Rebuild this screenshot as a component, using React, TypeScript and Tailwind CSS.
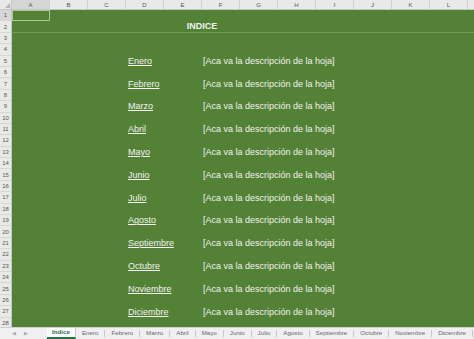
const columns = ["A", "B", "C", "D", "E", "F", "G", "H", "I", "J", "K", "L"]

const months = [
  "Enero",
  "Febrero",
  "Marzo",
  "Abril",
  "Mayo",
  "Junio",
  "Julio",
  "Agosto",
  "Septiembre",
  "Octubre",
  "Noviembre",
  "Diciembre",
]

const rowNumbers = Array.from({ length: 28 }, (_, i) => i + 1)

function ColumnHeader() {
  return (
    <div className="flex h-[10px] shrink-0 bg-[#e9e9e9] border-b border-[#c6c6c6]">
      <div className="relative w-[12px] shrink-0 border-r border-[#c6c6c6]">
        <div className="absolute right-[1px] bottom-[1px] w-0 h-0 border-l-[5px] border-l-transparent border-b-[5px] border-b-[#b4b4b4]" />
      </div>
      {columns.map((col) => (
        <div
          key={col}
          className={
            "w-[38px] shrink-0 flex items-center justify-center text-[6px] leading-none text-[#555] border-r border-[#d0d0d0] " +
            (col === "A" ? "bg-[#d6d6d6]" : "")
          }
        >
          {col}
        </div>
      ))}
      <div className="flex-1" />
    </div>
  )
}

function RowHeader() {
  return (
    <div className="w-[12px] shrink-0 bg-[#e9e9e9] border-r border-[#c6c6c6] flex flex-col">
      {rowNumbers.map((n) => (
        <div
          key={n}
          className={
            "h-[11.4px] shrink-0 flex items-center justify-center text-[6px] leading-none text-[#555] border-b border-[#d6d6d6] " +
            (n === 1 ? "bg-[#d6d6d6]" : "")
          }
        >
          {n}
        </div>
      ))}
    </div>
  )
}

function Sheet() {
  return (
    <div className="flex-1 bg-[#538135] flex flex-col text-[#f2f2f2]">
      <div className="h-[11.4px] shrink-0 flex">
        <div className="w-[38px] h-full border border-[#a9c99a]" />
      </div>
      <div className="h-[11.4px] shrink-0 flex border-b border-[#6f9a55]">
        <div className="w-[152px] shrink-0" />
        <div className="w-[76px] shrink-0 flex items-center justify-center text-[9px] font-bold leading-none">
          INDICE
        </div>
      </div>
      <div className="h-[22.8px] shrink-0" />
      {months.map((m) => (
        <div key={m} className="h-[22.8px] shrink-0 flex flex-col">
          <div className="h-[11.4px] flex items-center text-[9px] leading-none">
            <div className="w-[114px] shrink-0" />
            <div className="w-[76px] shrink-0 pl-[2px] underline">{m}</div>
            <div className="pl-[1px] whitespace-nowrap">
              [Aca va la descripción de la hoja]
            </div>
          </div>
        </div>
      ))}
    </div>
  )
}

function TabBar() {
  return (
    <div className="h-[12px] shrink-0 flex items-stretch bg-[#f0f0f0] border-t border-[#d0d0d0] text-[6.2px] leading-none text-[#666]">
      <div className="w-[47px] shrink-0 flex items-center gap-[8px] pl-[12px] text-[#aaa] text-[5px]">
        <span>◀</span>
        <span>▶</span>
      </div>
      <div className="px-[5px] flex items-center bg-white text-[#217346] font-bold border-b-2 border-[#217346] border-r border-r-[#c8c8c8]">
        Indice
      </div>
      {months.map((m) => (
        <div
          key={m}
          className="px-[6px] flex items-center border-r border-[#c8c8c8] my-[2px] whitespace-nowrap"
        >
          {m}
        </div>
      ))}
    </div>
  )
}

export default function App() {
  return (
    <div
      className="w-[474px] h-[339px] flex flex-col overflow-hidden bg-white"
      style={{ fontFamily: '"Liberation Sans", Arial, sans-serif' }}
    >
      <ColumnHeader />
      <div className="flex h-[317px] shrink-0 overflow-hidden">
        <RowHeader />
        <Sheet />
      </div>
      <TabBar />
    </div>
  )
}
